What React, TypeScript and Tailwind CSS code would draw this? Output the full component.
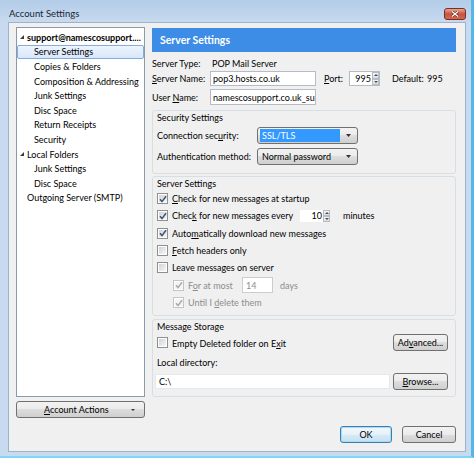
import type { ReactNode } from 'react'

const BTN = 'bg-[linear-gradient(#f2f2f2,#ebebeb_50%,#dddddd_50%,#cfcfcf)] border border-[#707070] rounded-[3px]'

function Check({ checked, disabled }: { checked?: boolean; disabled?: boolean }) {
  return (
    <span
      className={`w-[11px] h-[11px] shrink-0 border p-[1px] bg-white flex ${disabled ? 'border-[#c4c4c4]' : 'border-[#8e8f8f]'}`}
    >
      <span
        className={`flex-1 flex items-center justify-center ${disabled ? 'bg-[#f4f4f4]' : 'bg-gradient-to-br from-[#cfd3d9] to-[#f7f7f7]'}`}
      >
        {checked && (
          <svg width="8" height="8" viewBox="0 0 8 8">
            <path
              d="M1 4.3 L3 6.6 L7 1.2"
              fill="none"
              stroke={disabled ? '#a9a9a9' : '#3f5177'}
              strokeWidth="1.5"
            />
          </svg>
        )}
      </span>
    </span>
  )
}

function Spin() {
  return (
    <span className="flex flex-col w-[7px] h-full shrink-0">
      {[0, 1].map(i => (
        <span
          key={i}
          className="flex-1 border border-[#b5bcc7] bg-gradient-to-b from-[#f6f6f6] to-[#dedede] flex items-center justify-center"
        >
          <svg width="4" height="2" viewBox="0 0 4 2">
            <path d={i === 0 ? 'M0 2 L2 0 L4 2 Z' : 'M0 0 L2 2 L4 0 Z'} fill="#4d4d4d" />
          </svg>
        </span>
      ))}
    </span>
  )
}

function Select({ children, highlight }: { children: ReactNode; highlight?: boolean }) {
  return (
    <div className={`w-[101px] h-[17px] ${BTN} rounded-[2px] flex items-center pl-[2px] pr-[6px]`}>
      <span
        className={`flex-1 h-[13px] flex items-center pl-[2px] ${highlight ? 'bg-[#3399ff] text-white' : ''}`}
      >
        {children}
      </span>
      <svg width="5" height="3" viewBox="0 0 5 3" className="ml-[6px]">
        <path d="M0 0 L5 0 L2.5 3 Z" fill="#333" />
      </svg>
    </div>
  )
}

function Group({ title, className, children }: { title: string; className?: string; children: ReactNode }) {
  return (
    <div className={`border border-[#d5dfe5] rounded-[3px] px-[4px] ${className ?? ''}`}>
      <div className="h-[13px] flex items-center">{title}</div>
      {children}
    </div>
  )
}

function Row({ children, indent }: { children: ReactNode; indent?: boolean }) {
  return (
    <div className={`h-[17.33px] flex items-center gap-[4px] ${indent ? 'pl-[16px]' : ''}`}>{children}</div>
  )
}

const TREE: { label: string; level: number; bold?: boolean; open?: boolean; sel?: boolean }[] = [
  { label: 'support@namescosupport....', level: 0, bold: true, open: true },
  { label: 'Server Settings', level: 1, sel: true },
  { label: 'Copies & Folders', level: 1 },
  { label: 'Composition & Addressing', level: 1 },
  { label: 'Junk Settings', level: 1 },
  { label: 'Disc Space', level: 1 },
  { label: 'Return Receipts', level: 1 },
  { label: 'Security', level: 1 },
  { label: 'Local Folders', level: 0, open: true },
  { label: 'Junk Settings', level: 1 },
  { label: 'Disc Space', level: 1 },
  { label: 'Outgoing Server (SMTP)', level: 0 },
]

export default function App() {
  return (
    <div className="w-[474px] h-[458px] bg-[#c7daef] border-r-[3px] border-b-[2px] border-r-[#55b6e8] border-b-[#7fd6f6] flex flex-col text-[9px] leading-none text-black font-['Lato',sans-serif] overflow-hidden">
      {/* title bar */}
      <div className="h-[22px] shrink-0 flex items-start justify-between pl-[9px] pr-[5px] pt-[8px] bg-gradient-to-b from-[#b3cce8] to-[#c7daef]">
        <span className="text-[9.5px] text-[#1b2633] mt-[1px]">Account Settings</span>
        <div className="w-[22px] h-[12px] rounded-[3px] border border-[#7a2e25] bg-gradient-to-b from-[#e6a797] via-[#c8523f] to-[#d26a4f] flex items-center justify-center">
          <svg width="8" height="6" viewBox="0 0 8 6">
            <path d="M1 0.5 L7 5.5 M7 0.5 L1 5.5" stroke="#5a1c15" strokeWidth="2.4" />
            <path d="M1 0.5 L7 5.5 M7 0.5 L1 5.5" stroke="#fff" strokeWidth="1.4" />
          </svg>
        </div>
      </div>

      {/* client area */}
      <div className="ml-[8px] w-[458px] h-[430px] shrink-0 bg-[#f0f0f0] border border-[#9db3cb] flex flex-col pl-[7px] pr-[9px] pt-[4px]">
        <div className="h-[391px] flex">
          {/* left column */}
          <div className="w-[129px] flex flex-col">
            <div className="h-[370px] bg-white border border-[#8b9aab] pt-[2px]">
              {TREE.map((t, i) => (
                <div
                  key={i}
                  className={`h-[14.6px] flex items-center border ${t.sel ? 'bg-gradient-to-b from-[#eef5fd] to-[#d7e7fa] border-[#84acdd] rounded-[2px]' : 'border-transparent'} ${t.level === 0 ? 'pl-[2px]' : 'pl-[16px]'}`}
                >
                  {t.level === 0 && (
                    <span className="w-[7px] shrink-0 flex items-center">
                      {t.open && (
                        <svg width="4" height="4" viewBox="0 0 4 4">
                          <path d="M4 0 L4 4 L0 4 Z" fill="#3a3a3a" />
                        </svg>
                      )}
                    </span>
                  )}
                  <span className={`whitespace-nowrap ${t.bold ? 'font-bold' : ''}`}>{t.label}</span>
                </div>
              ))}
            </div>
            <div className={`mt-[4px] h-[17px] ${BTN} flex items-center pl-[27px] pr-[9px]`}>
              <span className="flex-1">
                <span className="underline">A</span>ccount Actions
              </span>
              <svg width="4" height="2" viewBox="0 0 4 2">
                <path d="M0 0 L4 0 L2 2 Z" fill="#333" />
              </svg>
            </div>
          </div>

          {/* right column */}
          <div className="ml-[7px] w-[304px] mt-[1px] flex flex-col">
            <div className="h-[24px] bg-[#3d8de6] text-white font-bold text-[10.5px] flex items-center pl-[8px]">
              Server Settings
            </div>

            <div className="mt-[3px] h-[16px] flex items-center">
              <span className="w-[60px]">Server Type:</span>
              <span>POP Mail Server</span>
            </div>
            <div className="h-[15px] flex items-center">
              <span className="w-[58px]">
                <span className="underline">S</span>erver Name:
              </span>
              <div className="w-[106px] h-[15px] bg-white border border-[#b5bcc7] flex items-center pl-[2px]">
                pop3.hosts.co.uk
              </div>
              <span className="ml-[8px] w-[25px]">
                <span className="underline">P</span>ort:
              </span>
              <div className="w-[31px] h-[15px] bg-white border border-[#b5bcc7] flex items-center justify-end">
                <span className="pr-[1px]">995</span>
                <Spin />
              </div>
              <span className="ml-[12px] w-[35px]">Default:</span>
              <span>995</span>
            </div>
            <div className="mt-[3px] h-[16px] flex items-center">
              <span className="w-[58px]">
                User <span className="underline">N</span>ame:
              </span>
              <div className="w-[106px] h-[16px] bg-white border border-[#b5bcc7] flex items-center pl-[2px] overflow-hidden whitespace-nowrap">
                namescosupport.co.uk_su
              </div>
            </div>

            <Group title="Security Settings" className="mt-[5px] pb-[8px]">
              <div className="mt-[3px] h-[17px] flex items-center">
                <span className="w-[100px]">
                  Connection sec<span className="underline">u</span>rity:
                </span>
                <Select highlight>SSL/TLS</Select>
              </div>
              <div className="mt-[4px] h-[17px] flex items-center">
                <span className="w-[100px]">
                  Authent<span className="underline">i</span>cation method:
                </span>
                <Select>Normal password</Select>
              </div>
            </Group>

            <Group title="Server Settings" className="mt-[2px] pb-[4px]">
              <Row>
                <Check checked />
                <span>
                  <span className="underline">C</span>heck for new messages at startup
                </span>
              </Row>
              <Row>
                <Check checked />
                <span className="w-[123px]">
                  Chec<span className="underline">k</span> for new messages every
                </span>
                <div className="w-[32px] h-[14px] bg-white border border-[#f0f0f0] flex items-center justify-end">
                  <span className="pr-[1px]">10</span>
                  <Spin />
                </div>
                <span className="ml-[8px]">minutes</span>
              </Row>
              <Row>
                <Check checked />
                <span>
                  Auto<span className="underline">m</span>atically download new messages
                </span>
              </Row>
              <Row>
                <Check />
                <span>
                  <span className="underline">F</span>etch headers only
                </span>
              </Row>
              <Row>
                <Check />
                <span>Leave messages on server</span>
              </Row>
              <Row indent>
                <Check checked disabled />
                <span className="w-[50px] text-[#8d8d8d]">
                  F<span className="underline">o</span>r at most
                </span>
                <div className="w-[31px] h-[16px] bg-white border border-[#c9ccd1] flex items-center pl-[3px] text-[#8d8d8d]">
                  14
                </div>
                <span className="ml-[3px] text-[#8d8d8d]">days</span>
              </Row>
              <Row indent>
                <Check checked disabled />
                <span className="text-[#8d8d8d]">
                  Until I <span className="underline">d</span>elete them
                </span>
              </Row>
            </Group>

            <Group title="Message Storage" className="mt-[3px] pb-[6px]">
              <div className="mt-[1px] h-[17px] flex items-center gap-[4px] pr-[3px]">
                <Check />
                <span className="flex-1 pt-[2px]">
                  Empty Deleted folder on E<span className="underline">x</span>it
                </span>
                <div className={`w-[55px] h-[17px] ${BTN} flex items-center justify-center`}>
                  <span>
                    Ad<span className="underline">v</span>anced...
                  </span>
                </div>
              </div>
              <div className="mt-[4px] h-[14px] flex items-center">Local directory:</div>
              <div className="mt-[4px] h-[17px] flex items-center pr-[3px]">
                <div className="-ml-[2px] w-[235px] h-[15px] bg-white border border-[#e3e9ef] flex items-center pl-[3px]">
                  C:\
                </div>
                <div className={`ml-auto w-[55px] h-[17px] ${BTN} flex items-center justify-center`}>
                  <span>
                    <span className="underline">B</span>rowse...
                  </span>
                </div>
              </div>
            </Group>
          </div>
        </div>

        {/* dialog buttons */}
        <div className="mt-[8px] flex justify-end gap-[10px]">
          <div className="w-[52px] h-[17px] rounded-[3px] border border-[#3c7fb1] bg-[linear-gradient(#f2f8fc,#e5f1fa_50%,#d6e9f6_50%,#c9e0f0)] shadow-[inset_0_0_0_1px_#a6dcf6] flex items-center justify-center">
            OK
          </div>
          <div className={`w-[54px] h-[17px] ${BTN} flex items-center justify-center`}>Cancel</div>
        </div>
      </div>
    </div>
  )
}
